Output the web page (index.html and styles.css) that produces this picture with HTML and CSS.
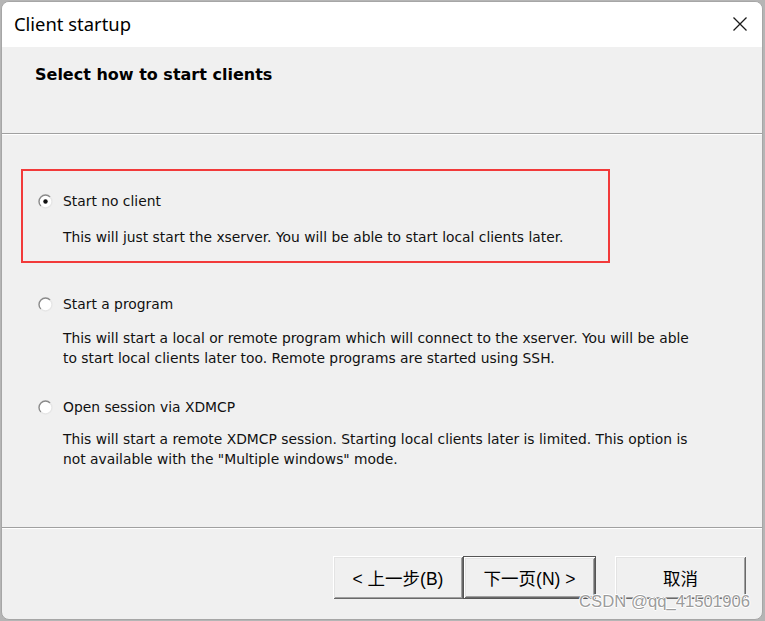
FILE: index.html
```html
<!DOCTYPE html>
<html>
<head>
<meta charset="utf-8">
<title>Client startup</title>
<link rel="stylesheet" href="styles.css">
</head>
<body>
<div class="window">
  <div class="titlebar">
    <span class="title">Client startup</span>
    <svg class="close" width="14" height="14" viewBox="0 0 14 14"><path d="M0.5 0.5L13.5 13.5M13.5 0.5L0.5 13.5" stroke="#1a1a1a" stroke-width="1.3" fill="none"/></svg>
  </div>
  <div class="header">
    <h1 class="heading">Select how to start clients</h1>
  </div>
  <div class="sep"></div>
  <div class="content">
    <div class="highlight">
      <div class="option first">
        <div class="opt-label">
          <svg class="radio" width="15" height="15" viewBox="0 0 15 15"><circle cx="7.5" cy="7.5" r="6.5" fill="#fff"/><path d="M2.9 12.1A6.5 6.5 0 0 1 12.1 2.9" stroke="#8a8a8a" stroke-width="1.4" fill="none"/><path d="M12.1 2.9A6.5 6.5 0 0 1 2.9 12.1" stroke="#e6e6e6" stroke-width="1.4" fill="none"/><circle cx="7.5" cy="7.5" r="2.2" fill="#111"/></svg>
          <span>Start no client</span>
        </div>
        <p class="desc">This will just start the xserver. You will be able to start local clients later.</p>
      </div>
    </div>
    <div class="option second">
      <div class="opt-label">
        <svg class="radio" width="15" height="15" viewBox="0 0 15 15"><circle cx="7.5" cy="7.5" r="6.5" fill="#fff"/><path d="M2.9 12.1A6.5 6.5 0 0 1 12.1 2.9" stroke="#8a8a8a" stroke-width="1.4" fill="none"/><path d="M12.1 2.9A6.5 6.5 0 0 1 2.9 12.1" stroke="#e6e6e6" stroke-width="1.4" fill="none"/></svg>
        <span>Start a program</span>
      </div>
      <p class="desc">This will start a local or remote program which will connect to the xserver. You will be able<br>to start local clients later too. Remote programs are started using SSH.</p>
    </div>
    <div class="option third">
      <div class="opt-label">
        <svg class="radio" width="15" height="15" viewBox="0 0 15 15"><circle cx="7.5" cy="7.5" r="6.5" fill="#fff"/><path d="M2.9 12.1A6.5 6.5 0 0 1 12.1 2.9" stroke="#8a8a8a" stroke-width="1.4" fill="none"/><path d="M12.1 2.9A6.5 6.5 0 0 1 2.9 12.1" stroke="#e6e6e6" stroke-width="1.4" fill="none"/></svg>
        <span>Open session via XDMCP</span>
      </div>
      <p class="desc">This will start a remote XDMCP session. Starting local clients later is limited. This option is<br>not available with the "Multiple windows" mode.</p>
    </div>
  </div>
  <div class="sep"></div>
  <div class="footer">
    <div class="btn-pair">
      <button class="btn">&lt; 上一步(B)</button>
      <button class="btn default">下一页(N) &gt;</button>
    </div>
    <button class="btn cancel">取消</button>
  </div>
  <div class="watermark">CSDN @qq_41501906</div>
</div>
</body>
</html>
```
FILE: styles.css
```css
html, body {
  margin: 0;
  padding: 0;
}
body {
  background: #b5b5b5;
  width: 765px;
  height: 621px;
  overflow: hidden;
}
.window {
  position: relative;
  margin: 1px 0 0 1px;
  width: 760px;
  height: 617px;
  border: 1px solid #a6a6a6;
  border-radius: 8px;
  background: #f0f0f0;
  overflow: hidden;
  display: flex;
  flex-direction: column;
  font-family: "DejaVu Sans", Verdana, sans-serif;
  color: #000;
}
.titlebar {
  height: 45px;
  flex: none;
  background: #fff;
  display: flex;
  align-items: center;
  justify-content: space-between;
  padding: 0 15px 0 12px;
}
.title {
  font-family: "Noto Sans", "Open Sans", sans-serif;
  font-size: 18.4px;
  color: #000;
  margin-top: -2px;
}
.close {
  margin-top: -2px;
}
.header {
  height: 86px;
  flex: none;
  box-sizing: border-box;
  padding: 18px 0 0 33px;
}
.heading {
  margin: 0;
  font-family: "DejaVu Sans", Verdana, sans-serif;
  font-weight: bold;
  font-size: 16px;
  line-height: 20px;
  color: #000;
}
.sep {
  flex: none;
  height: 1px;
  border-top: 1px solid #a0a0a0;
  background: #fff;
}
.content {
  flex: 1;
  padding: 34px 0 0 19px;
  font-size: 13.85px;
  color: #111;
}
.highlight {
  width: 570px;
  height: 90px;
  border: 2px solid #f23a3a;
  padding: 0 0 0 15px;
  box-sizing: content-box;
}
.highlight .option {
  padding-top: 20px;
}
.second {
  margin-top: 31px;
  padding-left: 17px;
}
.third {
  margin-top: 29px;
  padding-left: 17px;
}
.opt-label {
  display: flex;
  align-items: center;
  height: 20px;
  line-height: 20px;
}
.radio {
  flex: none;
  margin-right: 10px;
}
.desc {
  margin: 16px 0 0 25px;
  line-height: 20px;
}
.second .desc {
  margin-top: 14px;
}
.third .desc {
  margin-top: 12px;
}
.footer {
  flex: none;
  height: 90px;
  box-sizing: border-box;
  padding: 27px 0 0 331px;
  display: flex;
  align-items: flex-start;
}
.btn-pair {
  display: flex;
}
.btn {
  font-family: "Liberation Sans", "Noto Sans CJK SC", sans-serif;
  font-size: 17.5px;
  height: 43px;
  width: 130px;
  padding: 0;
  margin: 0;
  background: #f0f0f0;
  color: #000;
  border: none;
  border-radius: 0;
  box-shadow: inset 1px 1px 0 #fff, inset -1px -1px 0 #696969, inset 2px 2px 0 #e3e3e3, inset -2px -2px 0 #a0a0a0;
}
.btn.default {
  width: 133px;
  box-shadow: inset 0 0 0 1px #555, inset 2px 2px 0 #fff, inset -2px -2px 0 #696969, inset 3px 3px 0 #e3e3e3, inset -3px -3px 0 #a0a0a0;
}
.btn.cancel {
  margin-left: 19px;
  width: 131px;
}
.watermark {
  position: absolute;
  right: 12px;
  bottom: 7px;
  font-family: "Liberation Sans", Arial, sans-serif;
  font-size: 16.7px;
  color: #9c9c9c;
  text-shadow: 0 0 1px #fff, 1px 0 0 #fff, -1px 0 0 #fff, 0 1px 0 #fff, 0 -1px 0 #fff;
}
```
